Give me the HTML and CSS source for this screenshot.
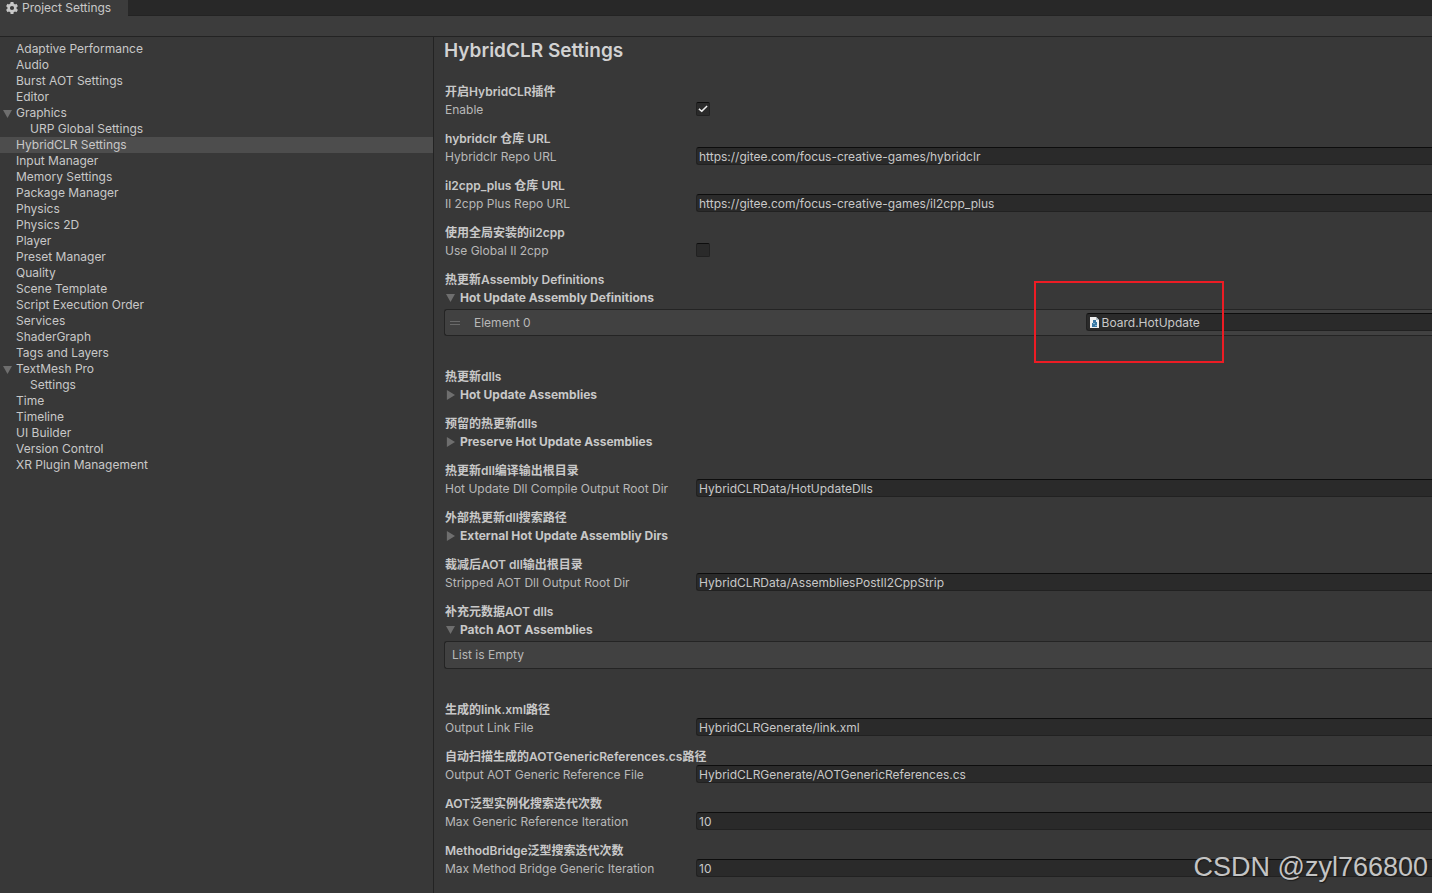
FILE: index.html
```html
<!DOCTYPE html>
<html lang="zh-CN">
<head>
    <meta charset="UTF-8">
    <meta name="viewport" content="width=device-width, initial-scale=1.0">
    <title>Project Settings</title>
    <link rel="stylesheet" href="styles.css">
</head>
<body>
    <header class="tab-bar">
        <div class="tab">
            <svg class="gear" viewBox="0 0 12 12" width="12" height="12">
                <circle cx="6" cy="6" r="3.4" fill="none" stroke="#c8c8c8" stroke-width="2.6"/>
                <path d="M6 0v2M6 10v2M.8 3l1.7 1M9.5 8l1.7 1M.8 9l1.7-1M9.5 4l1.7-1" stroke="#c8c8c8" stroke-width="3"/>
            </svg>
            <h1>Project Settings</h1>
        </div>
    </header>
    <div class="toolbar"></div>

    <div class="window">
        <nav class="sidebar">
            <ul>
                <li><a href="#">Adaptive Performance</a></li>
                <li><a href="#">Audio</a></li>
                <li><a href="#">Burst AOT Settings</a></li>
                <li><a href="#">Editor</a></li>
                <li><a href="#" class="parent">Graphics</a></li>
                <li><a href="#" class="child">URP Global Settings</a></li>
                <li><a href="#" class="selected">HybridCLR Settings</a></li>
                <li><a href="#">Input Manager</a></li>
                <li><a href="#">Memory Settings</a></li>
                <li><a href="#">Package Manager</a></li>
                <li><a href="#">Physics</a></li>
                <li><a href="#">Physics 2D</a></li>
                <li><a href="#">Player</a></li>
                <li><a href="#">Preset Manager</a></li>
                <li><a href="#">Quality</a></li>
                <li><a href="#">Scene Template</a></li>
                <li><a href="#">Script Execution Order</a></li>
                <li><a href="#">Services</a></li>
                <li><a href="#">ShaderGraph</a></li>
                <li><a href="#">Tags and Layers</a></li>
                <li><a href="#" class="parent">TextMesh Pro</a></li>
                <li><a href="#" class="child">Settings</a></li>
                <li><a href="#">Time</a></li>
                <li><a href="#">Timeline</a></li>
                <li><a href="#">UI Builder</a></li>
                <li><a href="#">Version Control</a></li>
                <li><a href="#">XR Plugin Management</a></li>
            </ul>
        </nav>

        <main class="inspector">
            <h2>HybridCLR Settings</h2>

            <section class="group">
                <h3>开启HybridCLR插件</h3>
                <div class="row">
                    <label for="enable">Enable</label>
                    <input type="checkbox" id="enable" checked>
                </div>
            </section>
            <section class="group">
                <h3>hybridclr 仓库 URL</h3>
                <div class="row">
                    <label for="hybridclr-url">Hybridclr Repo URL</label>
                    <input type="text" id="hybridclr-url" value="https://gitee.com/focus-creative-games/hybridclr">
                </div>
            </section>
            <section class="group">
                <h3>il2cpp_plus 仓库 URL</h3>
                <div class="row">
                    <label for="il2cpp-url">Il 2cpp Plus Repo URL</label>
                    <input type="text" id="il2cpp-url" value="https://gitee.com/focus-creative-games/il2cpp_plus">
                </div>
            </section>
            <section class="group">
                <h3>使用全局安装的il2cpp</h3>
                <div class="row">
                    <label for="use-global">Use Global Il 2cpp</label>
                    <input type="checkbox" id="use-global">
                </div>
            </section>
            <section class="group">
                <h3>热更新Assembly Definitions</h3>
                <details open>
                    <summary>Hot Update Assembly Definitions</summary>
                    <div class="list element">
                        <span class="handle"></span>
                        <label for="element-0">Element 0</label>
                        <div class="object-cell">
                            <button type="button" class="object-field" id="element-0">
                                <svg viewBox="0 0 9 11" width="9" height="11">
                                    <path d="M0 0h6l3 3v8H0z" fill="#f0f0f0"/>
                                    <path d="M6 0v3h3z" fill="#b5c4cc"/>
                                    <path d="M3 3h3v2h1v5H2V6h1z" fill="#3a79a5"/>
                                    <path d="M3 6h2v1H3zM5 8h2v1H5z" fill="#7fb2d0"/>
                                </svg>
                                Board.HotUpdate
                            </button>
                            <div class="highlight"></div>
                        </div>
                    </div>
                </details>
            </section>
            <section class="group">
                <h3>热更新dlls</h3>
                <details>
                    <summary>Hot Update Assemblies</summary>
                </details>
            </section>
            <section class="group">
                <h3>预留的热更新dlls</h3>
                <details>
                    <summary>Preserve Hot Update Assemblies</summary>
                </details>
            </section>
            <section class="group">
                <h3>热更新dll编译输出根目录</h3>
                <div class="row">
                    <label for="hot-update-dir">Hot Update Dll Compile Output Root Dir</label>
                    <input type="text" id="hot-update-dir" value="HybridCLRData/HotUpdateDlls">
                </div>
            </section>
            <section class="group">
                <h3>外部热更新dll搜索路径</h3>
                <details>
                    <summary>External Hot Update Assembliy Dirs</summary>
                </details>
            </section>
            <section class="group">
                <h3>裁减后AOT dll输出根目录</h3>
                <div class="row">
                    <label for="stripped-dir">Stripped AOT Dll Output Root Dir</label>
                    <input type="text" id="stripped-dir" value="HybridCLRData/AssembliesPostIl2CppStrip">
                </div>
            </section>
            <section class="group">
                <h3>补充元数据AOT dlls</h3>
                <details open>
                    <summary>Patch AOT Assemblies</summary>
                    <div class="list empty">List is Empty</div>
                </details>
            </section>
            <section class="group">
                <h3>生成的link.xml路径</h3>
                <div class="row">
                    <label for="link-file">Output Link File</label>
                    <input type="text" id="link-file" value="HybridCLRGenerate/link.xml">
                </div>
            </section>
            <section class="group">
                <h3>自动扫描生成的AOTGenericReferences.cs路径</h3>
                <div class="row">
                    <label for="reference-file">Output AOT Generic Reference File</label>
                    <input type="text" id="reference-file" value="HybridCLRGenerate/AOTGenericReferences.cs">
                </div>
            </section>
            <section class="group">
                <h3>AOT泛型实例化搜索迭代次数</h3>
                <div class="row">
                    <label for="max-reference">Max Generic Reference Iteration</label>
                    <input type="text" id="max-reference" value="10">
                </div>
            </section>
            <section class="group">
                <h3>MethodBridge泛型搜索迭代次数</h3>
                <div class="row">
                    <label for="max-bridge">Max Method Bridge Generic Iteration</label>
                    <input type="text" id="max-bridge" value="10">
                </div>
            </section>
        </main>
    </div>

    <div class="watermark">CSDN @zyl766800</div>
</body>
</html>
```
FILE: styles.css
```css
* {
    box-sizing: border-box;
}

body {
    margin: 0;
    min-height: 100vh;
    display: flex;
    flex-direction: column;
    position: relative;
    background-color: #383838;
    color: #c8c8c8;
    font-family: "Inter", "Noto Sans CJK SC", sans-serif;
    font-size: 12px;
    line-height: 16px;
}

h1, h2, h3, ul {
    margin: 0;
    padding: 0;
}

/* Tab and toolbar */
.tab-bar {
    display: flex;
    height: 16px;
    background-color: #282828;
    border-bottom: 1px solid #232323;
}

.tab {
    display: flex;
    align-items: center;
    gap: 4px;
    height: 16px;
    padding: 0 17px 0 6px;
    background-color: #3c3c3c;
}

.tab h1 {
    font-size: 12px;
    font-weight: normal;
}

.toolbar {
    height: 21px;
    background-color: #3c3c3c;
    border-bottom: 1px solid #232323;
}

.window {
    flex: 1;
    display: flex;
}

/* Settings tree */
.sidebar {
    flex: 0 0 434px;
    padding-top: 4px;
    border-right: 1px solid #232323;
}

.sidebar ul {
    list-style: none;
}

.sidebar a {
    display: flex;
    align-items: center;
    height: 16px;
    padding-left: 16px;
    color: #c8c8c8;
    text-decoration: none;
}

.sidebar .parent {
    padding-left: 3px;
}

.sidebar .child {
    padding-left: 30px;
}

.sidebar .selected {
    background-color: #4d4d4d;
}

.parent::before,
summary::before {
    content: "";
    width: 9px;
    height: 8px;
    margin-right: 4px;
    background-color: #6e6e6e;
    clip-path: polygon(0 0, 100% 0, 50% 100%);
}

.parent::before {
    margin-top: 2px;
}

/* Inspector */
.inspector {
    flex: 1;
    min-width: 0;
    padding-left: 10px;
}

.inspector h2 {
    margin-bottom: 17px;
    font-size: 19px;
    font-weight: 600;
    line-height: 28px;
    color: #d2d2d2;
}

.group {
    margin-bottom: 11px;
}

.group h3 {
    height: 18px;
    padding-left: 1px;
    font-size: 12px;
    font-weight: 600;
    line-height: 20px;
    white-space: nowrap;
}

.row {
    display: grid;
    grid-template-columns: 252px 1fr;
    height: 18px;
}

.row label {
    padding-left: 1px;
    line-height: 20px;
    color: #b8b8b8;
}

input[type="text"],
.object-field {
    height: 18px;
    min-width: 0;
    margin: 0;
    padding: 0 2px;
    border: 1px solid #212121;
    border-top-color: #0d0d0d;
    border-right: 0;
    border-radius: 3px 0 0 3px;
    background-color: #2a2a2a;
    color: #c8c8c8;
    font: inherit;
    outline: none;
}

input[type="checkbox"] {
    appearance: none;
    width: 14px;
    height: 14px;
    margin: 2px 0;
    display: grid;
    place-items: center;
    border: 1px solid #212121;
    border-top-color: #0d0d0d;
    border-radius: 2px;
    background-color: #2a2a2a;
}

input[type="checkbox"]:checked::before {
    content: "";
    width: 10px;
    height: 8px;
    background-color: #f0f0f0;
    clip-path: polygon(4% 55%, 14% 42%, 36% 66%, 86% 6%, 96% 18%, 38% 90%);
}

summary {
    display: flex;
    align-items: center;
    height: 18px;
    padding-left: 2px;
    font-weight: 700;
    line-height: 18px;
    padding-top: 2px;
    list-style: none;
}

summary::before {
    margin-right: 5px;
}

details:not([open]) summary::before {
    height: 10px;
    clip-path: polygon(10% 0, 100% 50%, 10% 100%);
}

/* Reorderable lists */
.list {
    margin: 3px 0 31px;
    border: 1px solid #242424;
    border-right: 0;
    border-radius: 3px 0 0 3px;
    background-color: #414141;
    color: #b8b8b8;
}

.element {
    display: grid;
    grid-template-columns: 29px 1fr 35%;
    align-items: center;
    height: 27px;
}

.handle {
    width: 10px;
    height: 4px;
    margin-left: 5px;
    border-top: 1px solid #6a6a6a;
    border-bottom: 1px solid #6a6a6a;
}

.object-cell {
    position: relative;
    height: 18px;
    margin: 0 0 1px -1px;
}

.object-field {
    display: flex;
    align-items: center;
    gap: 3px;
    width: 100%;
    padding: 1px 0 0 3px;
}

.highlight {
    position: absolute;
    top: -32px;
    left: -52px;
    width: 190px;
    height: 82px;
    border: 2px solid #ed1c24;
    pointer-events: none;
}

.empty {
    height: 28px;
    padding-left: 7px;
    line-height: 26px;
}

.watermark {
    position: absolute;
    right: 4px;
    bottom: 10px;
    font-family: "Liberation Sans", Arial, sans-serif;
    font-size: 27px;
    line-height: 32px;
    color: #c4c4c4;
    text-shadow: 1px 1px 1px #1a1a1a;
}
```
